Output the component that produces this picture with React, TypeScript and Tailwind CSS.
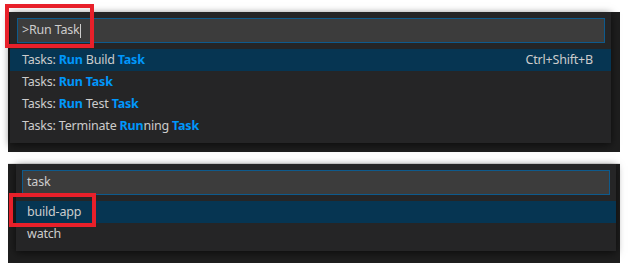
import React from "react";

type Part = { t: string; hl?: boolean };

const topRows: { parts: Part[]; keys?: string }[] = [
  {
    parts: [
      { t: "Tasks: " },
      { t: "Run", hl: true },
      { t: " Build " },
      { t: "Task", hl: true },
    ],
    keys: "Ctrl+Shift+B",
  },
  { parts: [{ t: "Tasks: " }, { t: "Run", hl: true }, { t: " " }, { t: "Task", hl: true }] },
  {
    parts: [
      { t: "Tasks: " },
      { t: "Run", hl: true },
      { t: " Test " },
      { t: "Task", hl: true },
    ],
  },
  {
    parts: [
      { t: "Tasks: Terminate " },
      { t: "Run", hl: true },
      { t: "ning " },
      { t: "Task", hl: true },
    ],
  },
];

const font = { fontFamily: '"Noto Sans", "Open Sans", sans-serif' };

function Row({
  parts,
  keys,
  selected,
  pl,
}: {
  parts: Part[];
  keys?: string;
  selected?: boolean;
  pl: string;
}) {
  return (
    <div
      className={`flex h-[22px] items-center justify-between pr-[18px] text-[12.5px] tracking-[-0.2px] text-[#cccccc] ${pl} ${
        selected ? "bg-[#063552]" : ""
      }`}
    >
      <span className="whitespace-pre">
        {parts.map((p, i) => (
          <span key={i} className={p.hl ? "font-bold text-[#0097fb]" : ""}>
            {p.t}
          </span>
        ))}
      </span>
      {keys && <span className="text-[#cccccc]">{keys}</span>}
    </div>
  );
}

export default function App() {
  return (
    <div className="relative h-[276px] w-[629px] bg-white pt-[12px]" style={font}>
      {/* top: command palette */}
      <div className="ml-[8px] h-[140px] w-[612px] bg-[#1e1e1e] pl-[2px]">
        <div className="w-[601px] bg-[#252526] pb-[6px] pt-[6px] shadow-[0_2px_8px_rgba(0,0,0,0.6)]">
          <div className="ml-[7px] mr-[6px] flex h-[25px] items-center border border-[#0e5a8c] bg-[#3c3c3c] pl-[4px] text-[12.5px] tracking-[-0.2px] text-[#cccccc]">
            <span>&gt;Run Task</span>
            <span className="ml-[1px] h-[14px] w-[1px] bg-[#cccccc]" />
          </div>
          <div className="mt-[6px]">
            {topRows.map((r, i) => (
              <Row key={i} parts={r.parts} keys={r.keys} selected={i === 0} pl="pl-[12px]" />
            ))}
          </div>
        </div>
      </div>

      {/* bottom: task picker */}
      <div className="ml-[8px] mt-[11px] h-[100px] w-[612px] border-t border-[#e6e6e6] bg-[#1e1e1e] pl-[8px]">
        <div className="w-[600px] bg-[#252526] pb-[6px] pt-[6px] shadow-[0_2px_8px_rgba(0,0,0,0.6)]">
          <div className="mx-[6px] flex h-[25px] items-center border border-[#0e5a8c] bg-[#3c3c3c] pl-[4px] text-[12.5px] tracking-[-0.2px] text-[#cccccc]">
            task
          </div>
          <div className="mt-[6px]">
            <Row parts={[{ t: "build-app" }]} selected pl="pl-[11px]" />
            <Row parts={[{ t: "watch" }]} pl="pl-[11px]" />
          </div>
        </div>
      </div>

      {/* annotation boxes */}
      <div className="absolute left-[5px] top-[4px] h-[44px] w-[89px] border-4 border-[#e8202a]" />
      <div className="absolute left-[9px] top-[193px] h-[34px] w-[87px] border-4 border-[#e8202a]" />
    </div>
  );
}
